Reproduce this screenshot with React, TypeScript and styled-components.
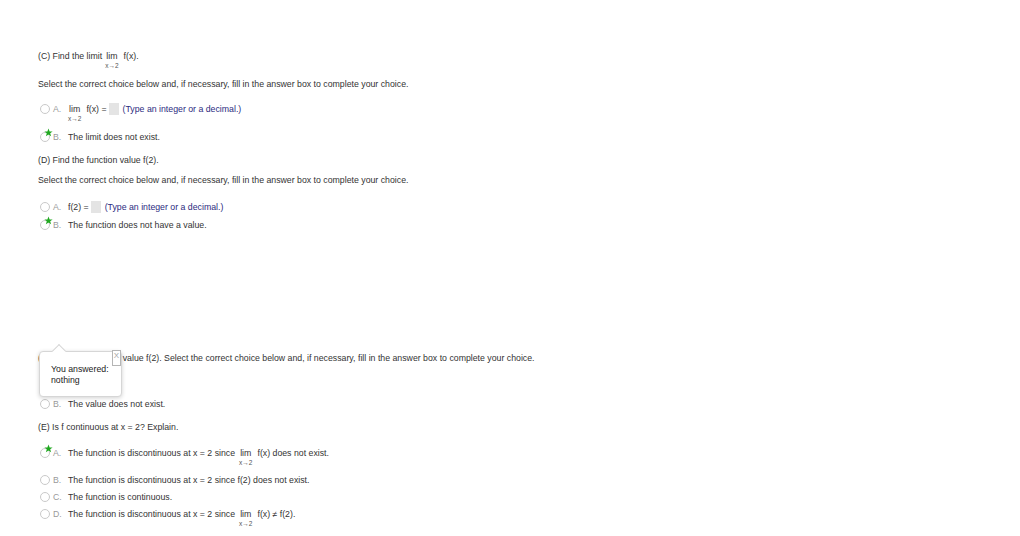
import React from "react";
import styled, { createGlobalStyle } from "styled-components";

const GlobalStyle = createGlobalStyle`
  html, body {
    margin: 0;
    padding: 0;
    background: #ffffff;
  }
  body {
    font-family: "Liberation Sans", Arial, sans-serif;
    font-size: 8.75px;
    color: #333333;
  }
`;

const Page = styled.div`
  width: 1020px;
  height: 536px;
  padding: 0 0 0 38px;
  box-sizing: border-box;
  overflow: hidden;
`;

const Section = styled.div<{ $top: number }>`
  position: relative;
  margin-top: ${({ $top }) => $top}px;
`;

const Line = styled.div<{ $top?: number }>`
  display: flex;
  align-items: flex-start;
  line-height: 12px;
  white-space: pre;
  margin-top: ${({ $top }) => $top ?? 0}px;
`;

const Choice = styled.div<{ $top?: number }>`
  display: flex;
  align-items: flex-start;
  line-height: 12px;
  white-space: pre;
  margin-top: ${({ $top }) => $top ?? 0}px;
`;

const RadioWrap = styled.span`
  position: relative;
  width: 10px;
  height: 12px;
  margin: 0 3px 0 2px;
  flex-shrink: 0;
`;

const Circle = styled.span`
  position: absolute;
  left: 0;
  top: 1px;
  width: 8px;
  height: 8px;
  border: 1px solid #c9c9c9;
  border-radius: 50%;
  background: #fff;
`;

const Star = styled.svg`
  position: absolute;
  left: 4px;
  top: -3px;
  width: 9px;
  height: 9px;
`;

const Letter = styled.span`
  color: #9a9a9a;
  width: 15px;
  flex-shrink: 0;
`;

const Lim = styled.span<{ $left?: number }>`
  display: inline-flex;
  flex-direction: column;
  align-items: center;
  margin: 0 5px 0 ${({ $left }) => $left ?? 3}px;
`;

const LimSub = styled.span`
  font-size: 6.5px;
  line-height: 8px;
  color: #555;
`;

const AnswerBox = styled.span`
  display: inline-block;
  width: 10px;
  height: 12px;
  background: #e4e4e4;
  margin: 0 4px 0 2px;
`;

const Hint = styled.span`
  color: #2b2b80;
`;

const Hidden = styled.span`
  padding-right: 3px;
`;

const Tooltip = styled.div`
  position: absolute;
  left: 1px;
  top: -1px;
  width: 83px;
  height: 46px;
  box-sizing: border-box;
  background: #fff;
  border: 1px solid #d6d6d6;
  border-radius: 4px;
  box-shadow: 0 1px 4px rgba(0, 0, 0, 0.18);
  padding: 12px 0 0 11px;
  line-height: 11px;
  color: #222;
  &::before {
    content: "";
    position: absolute;
    left: 14px;
    top: -6px;
    width: 9px;
    height: 9px;
    background: #fff;
    border-left: 1px solid #d6d6d6;
    border-top: 1px solid #d6d6d6;
    transform: rotate(45deg);
  }
`;

const CloseBox = styled.span`
  position: absolute;
  right: 0;
  top: -2px;
  width: 7px;
  height: 14px;
  border: 1px solid #b5b5b5;
  background: #fff;
  color: #a5a5a5;
  font-size: 8px;
  line-height: 9px;
  text-align: center;
`;

function Radio({ starred }: { starred?: boolean }) {
  return (
    <RadioWrap>
      <Circle />
      {starred && (
        <Star viewBox="0 0 24 24">
          <polygon
            points="12,1 15,9 23,9 16.5,14 19,22 12,17 5,22 7.5,14 1,9 9,9"
            fill="#1fa81f"
          />
        </Star>
      )}
    </RadioWrap>
  );
}

function Limit({ after, left }: { after: string; left?: number }) {
  return (
    <>
      <Lim $left={left}>
        <span>lim</span>
        <LimSub>x→2</LimSub>
      </Lim>
      <span>{after}</span>
    </>
  );
}

function Option({
  letter,
  starred,
  top,
  children,
}: {
  letter: string;
  starred?: boolean;
  top?: number;
  children: React.ReactNode;
}) {
  return (
    <Choice $top={top}>
      <Radio starred={starred} />
      <Letter>{letter}.</Letter>
      {children}
    </Choice>
  );
}

const SELECT =
  "Select the correct choice below and, if necessary, fill in the answer box to complete your choice.";

export default function App() {
  return (
    <Page>
      <GlobalStyle />
      <Section $top={50}>
        <Line>
          <span>(C) Find the limit</span>
          <Limit after="f(x)." />
        </Line>
        <Line $top={8}>{SELECT}</Line>
        <Option letter="A" top={13}>
          <Limit after="f(x) =" left={0} />
          <AnswerBox />
          <Hint>(Type an integer or a decimal.)</Hint>
        </Option>
        <Option letter="B" starred top={8}>
          The limit does not exist.
        </Option>
      </Section>

      <Section $top={11}>
        <Line>(D) Find the function value f(2).</Line>
        <Line $top={8}>{SELECT}</Line>
        <Option letter="A" top={15}>
          <span>f(2) =</span>
          <AnswerBox />
          <Hint>(Type an integer or a decimal.)</Hint>
        </Option>
        <Option letter="B" starred top={6}>
          The function does not have a value.
        </Option>
      </Section>

      <Section $top={121}>
        <Line>
          <Hidden>(D) Find the function</Hidden>
          <span> value f(2). {SELECT}</span>
        </Line>
        <Option letter="B" top={34}>
          The value does not exist.
        </Option>
        <Tooltip>
          You answered:
          <br />
          nothing
          <CloseBox>X</CloseBox>
        </Tooltip>
      </Section>

      <Section $top={11}>
        <Line>(E) Is f continuous at x = 2? Explain.</Line>
        <Option letter="A" starred top={14}>
          <span>The function is discontinuous at x = 2 since</span>
          <Limit after="f(x) does not exist." left={4} />
        </Option>
        <Option letter="B" top={7}>
          The function is discontinuous at x = 2 since f(2) does not exist.
        </Option>
        <Option letter="C" top={5}>
          The function is continuous.
        </Option>
        <Option letter="D" top={5}>
          <span>The function is discontinuous at x = 2 since</span>
          <Limit after="f(x) ≠ f(2)." left={4} />
        </Option>
      </Section>
    </Page>
  );
}
